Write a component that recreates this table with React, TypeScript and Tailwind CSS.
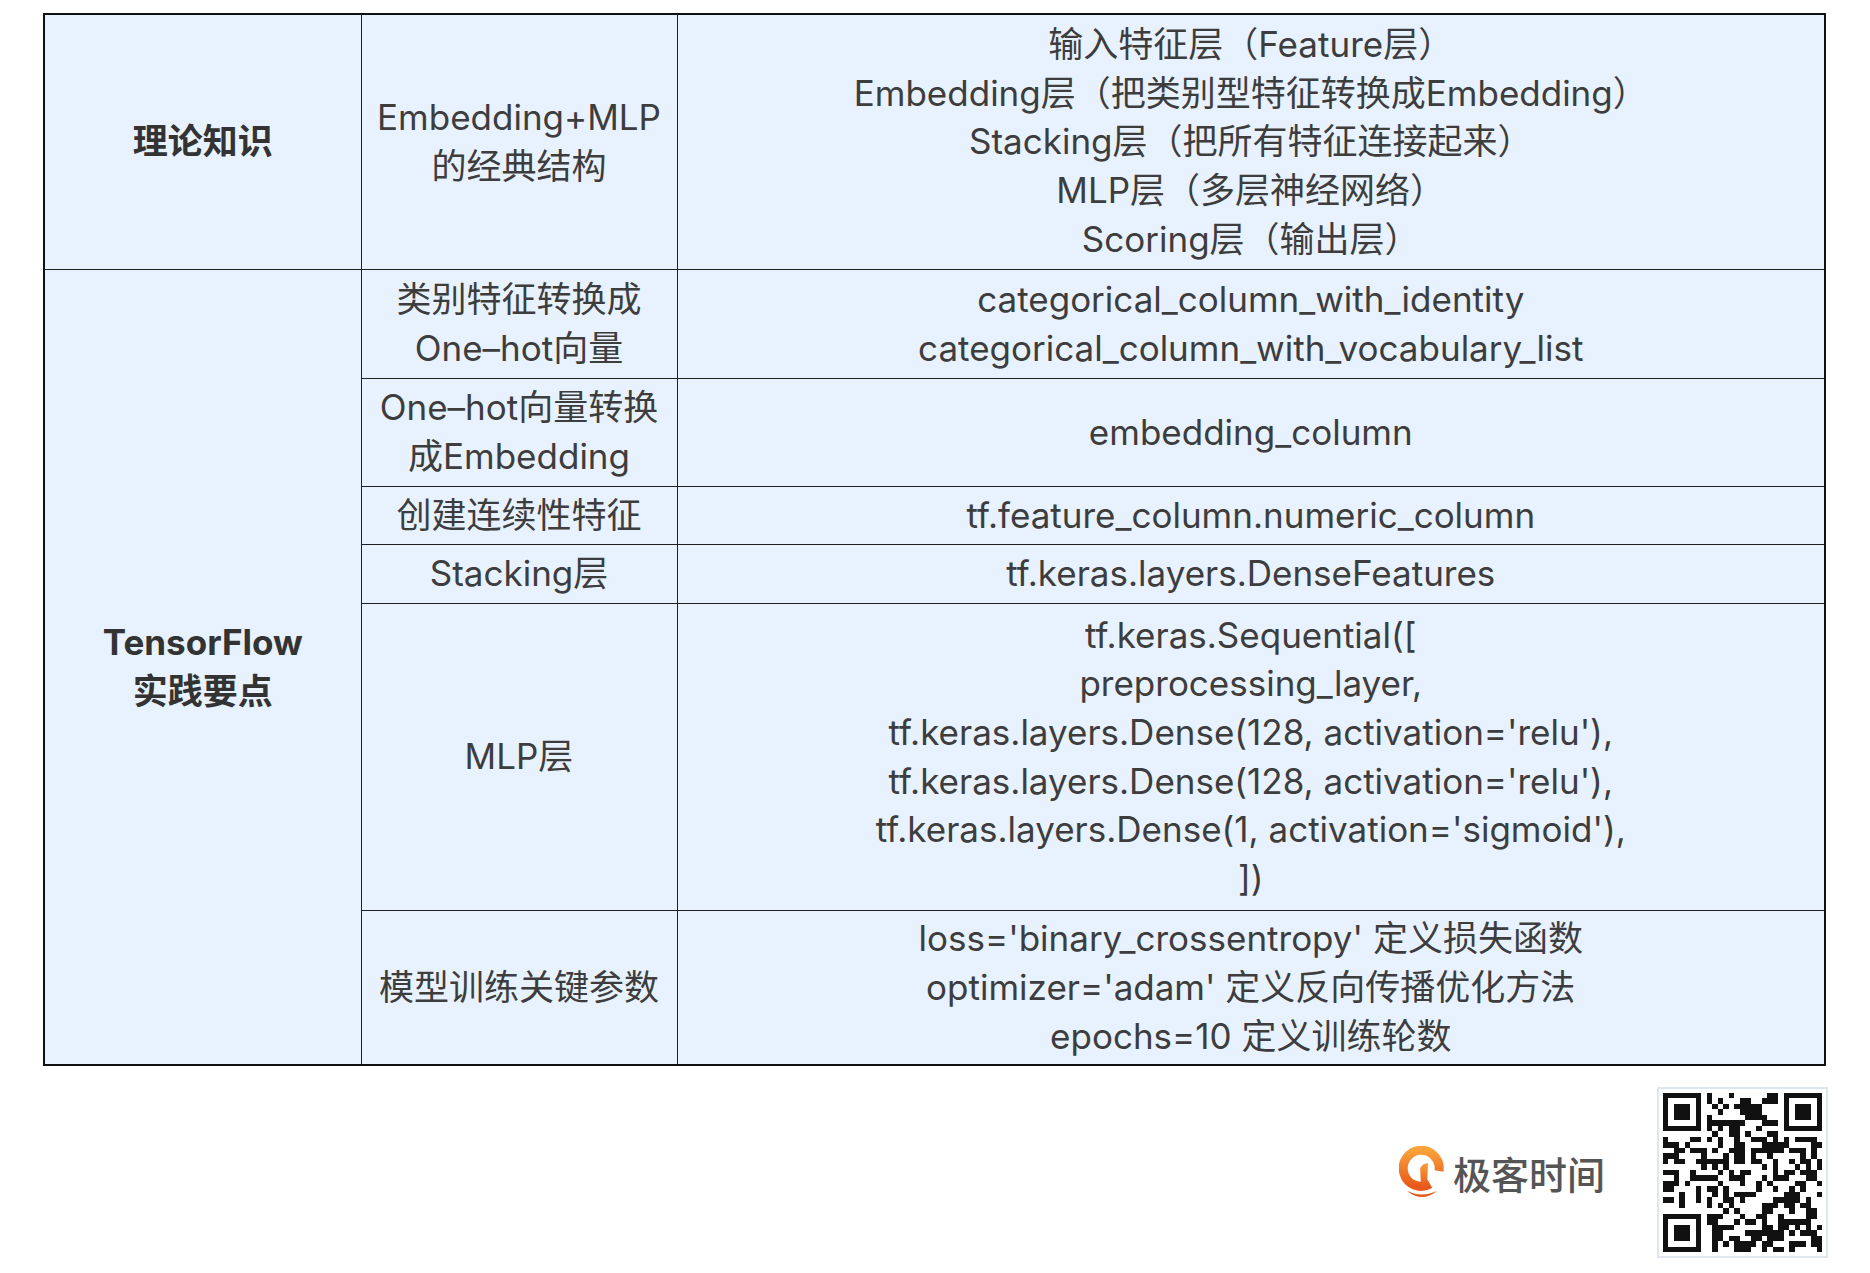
import React from 'react'

const font = { fontFamily: 'Inter, "Noto Sans CJK SC", sans-serif' }

// deterministic fake QR pattern
function qrCells(n: number) {
    const cells: boolean[][] = []
    let seed = 1337
    const rand = () => {
        seed = (seed * 9301 + 49297) % 233280
        return seed / 233280
    }
    for (let y = 0; y < n; y++) {
        const row: boolean[] = []
        for (let x = 0; x < n; x++) row.push(rand() > 0.52)
        cells.push(row)
    }
    const finder = (ox: number, oy: number) => {
        for (let y = -1; y < 8; y++)
            for (let x = -1; x < 8; x++) {
                const cx = ox + x
                const cy = oy + y
                if (cx < 0 || cy < 0 || cx >= n || cy >= n) continue
                const inRing = x >= 0 && x <= 6 && y >= 0 && y <= 6 && (x === 0 || x === 6 || y === 0 || y === 6)
                const inCore = x >= 2 && x <= 4 && y >= 2 && y <= 4
                cells[cy][cx] = inRing || inCore
            }
    }
    finder(0, 0)
    finder(n - 7, 0)
    finder(0, n - 7)
    return cells
}

function QrCode() {
    const n = 29
    const cells = qrCells(n)
    return (
        <div className="w-[171px] h-[171px] border-2 border-[#dfe6ee] bg-white p-[4px]">
            <svg viewBox={`0 0 ${n} ${n}`} className="w-full h-full" shapeRendering="crispEdges">
                {cells.map((row, y) =>
                    row.map((on, x) => (on ? <rect key={`${x}-${y}`} x={x} y={y} width={1} height={1} fill="#111" /> : null))
                )}
            </svg>
        </div>
    )
}

function GeekLogo() {
    return (
        <div className="flex items-center gap-[8px]">
            <svg width="46" height="54" viewBox="0 0 46 54">
                <defs>
                    <linearGradient id="geek" x1="0" y1="0" x2="0" y2="1">
                        <stop offset="0" stopColor="#f8a23a" />
                        <stop offset="1" stopColor="#e9581b" />
                    </linearGradient>
                </defs>
                {/* ring, open at the lower right */}
                <path d="M31 38 A18 18 0 1 1 40 25" fill="none" stroke="url(#geek)" strokeWidth="9" />
                {/* inner down stroke */}
                <path d="M21 19 L29 17 L28 41 L22 41 Z" fill="url(#geek)" />
                <path d="M15 26 L23 17" stroke="#ffffff" strokeWidth="3.5" />
                {/* swoosh under the ring */}
                <path d="M8 45 Q23 52 38 45 Q23 57 8 45 Z" fill="#e9581b" />
            </svg>
            <span className="text-[38px] leading-none text-[#555] font-medium" style={{ fontFamily: '"Noto Sans CJK SC", sans-serif' }}>
                极客时间
            </span>
        </div>
    )
}

const td = 'border-[1.5px] border-[#1f1f1f] text-center align-middle px-1'

function Lines({ items }: { items: string[] }) {
    return (
        <>
            {items.map((t, i) => (
                <div key={i} className="whitespace-nowrap">{t}</div>
            ))}
        </>
    )
}

export default function App() {
    return (
        <div className="min-h-screen bg-white pl-[43px] pt-[13px]" style={font}>
            <table className="w-[1783px] border-collapse border-2 border-[#111] bg-[#e8f2fe] text-[35px] leading-[48.6px] text-[#3d3d3d] table-fixed">
                <colgroup>
                    <col className="w-[317px]" />
                    <col className="w-[316px]" />
                    <col />
                </colgroup>
                <tbody>
                    <tr className="h-[255px]">
                        <td className={`${td} font-bold text-[#333]`}>理论知识</td>
                        <td className={td}>
                            <Lines items={['Embedding+MLP', '的经典结构']} />
                        </td>
                        <td className={td}>
                            <Lines
                                items={[
                                    '输入特征层（Feature层）',
                                    'Embedding层（把类别型特征转换成Embedding）',
                                    'Stacking层（把所有特征连接起来）',
                                    'MLP层（多层神经网络）',
                                    'Scoring层（输出层）',
                                ]}
                            />
                        </td>
                    </tr>
                    <tr className="h-[109px]">
                        <td rowSpan={6} className={`${td} font-bold text-[#333]`}>
                            <Lines items={['TensorFlow', '实践要点']} />
                        </td>
                        <td className={td}>
                            <Lines items={['类别特征转换成', 'One–hot向量']} />
                        </td>
                        <td className={td}>
                            <Lines items={['categorical_column_with_identity', 'categorical_column_with_vocabulary_list']} />
                        </td>
                    </tr>
                    <tr className="h-[108px]">
                        <td className={td}>
                            <Lines items={['One–hot向量转换', '成Embedding']} />
                        </td>
                        <td className={td}>embedding_column</td>
                    </tr>
                    <tr className="h-[58px]">
                        <td className={td}>创建连续性特征</td>
                        <td className={td}>tf.feature_column.numeric_column</td>
                    </tr>
                    <tr className="h-[59px]">
                        <td className={td}>Stacking层</td>
                        <td className={td}>tf.keras.layers.DenseFeatures</td>
                    </tr>
                    <tr className="h-[307px]">
                        <td className={td}>MLP层</td>
                        <td className={td}>
                            <Lines
                                items={[
                                    'tf.keras.Sequential([',
                                    'preprocessing_layer,',
                                    "tf.keras.layers.Dense(128, activation='relu'),",
                                    "tf.keras.layers.Dense(128, activation='relu'),",
                                    "tf.keras.layers.Dense(1, activation='sigmoid'),",
                                    '])',
                                ]}
                            />
                        </td>
                    </tr>
                    <tr className="h-[155px]">
                        <td className={td}>模型训练关键参数</td>
                        <td className={td}>
                            <Lines
                                items={[
                                    "loss='binary_crossentropy' 定义损失函数",
                                    "optimizer='adam' 定义反向传播优化方法",
                                    'epochs=10 定义训练轮数',
                                ]}
                            />
                        </td>
                    </tr>
                </tbody>
            </table>
            <div className="w-[1785px] flex justify-end items-center gap-[52px] mt-[21px]">
                <GeekLogo />
                <QrCode />
            </div>
        </div>
    )
}
